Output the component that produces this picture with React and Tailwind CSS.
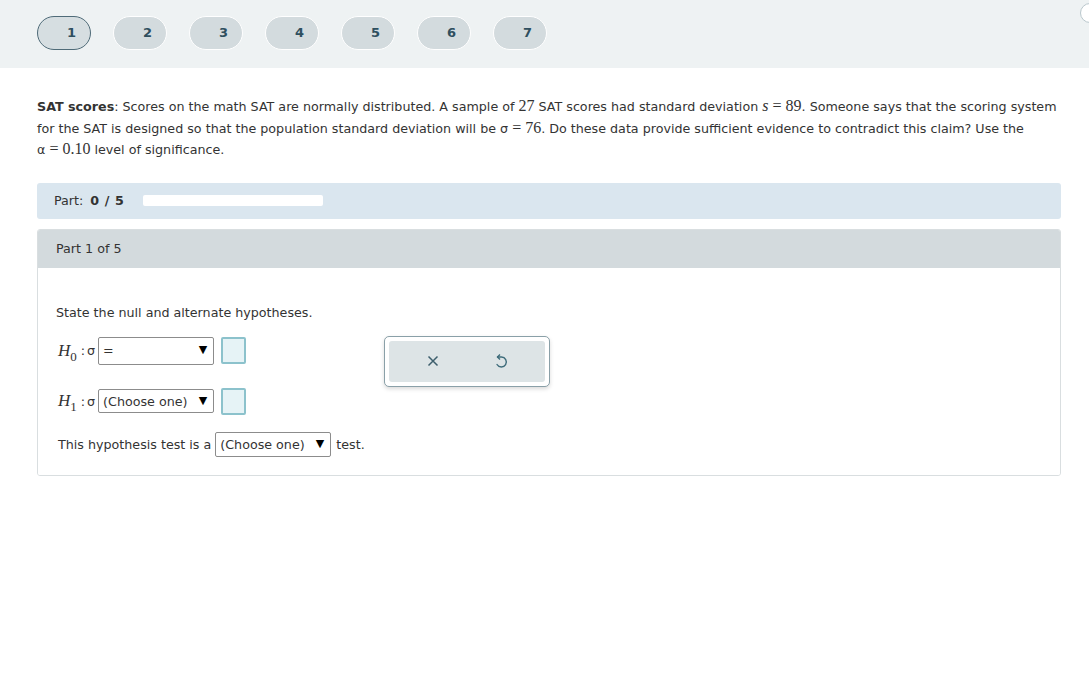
import React from "react";

const steps = [1, 2, 3, 4, 5, 6, 7];

const M = ({ children, italic }) => (
  <span
    className={`font-['Liberation_Serif',serif] text-[16px] leading-none ${italic ? "italic" : ""}`}
  >
    {children}
  </span>
);

const Select = ({ label, className }) => (
  <div
    className={`flex items-center justify-between border border-[#8c8c8c] rounded-[2px] bg-white pl-[4px] pr-[6px] ${className}`}
  >
    <span>{label}</span>
    <span className="text-[11px] text-black">▼</span>
  </div>
);

const Hyp = ({ sub, h }) => (
  <div className="flex items-center">
    <span className="font-['Liberation_Serif',serif] italic text-[17px] text-[#333]">H</span>
    <span className="font-['Liberation_Serif',serif] text-[13px] relative top-[6px] text-[#333]">{sub}</span>
    <span className="ml-[4px] mr-[2px]">:</span>
    <span>σ</span>
    <div className="ml-[3px]">
      <Select label={h === 0 ? "=" : "(Choose one)"} className={h === 0 ? "w-[116px] h-[28px]" : "w-[116px] h-[24px]"} />
    </div>
    <div className="ml-[7px] w-[25px] h-[27px] rounded-[2px] border-2 border-[#8cc2cc] bg-[#e6f3f6]" />
  </div>
);

export default function App() {
  return (
    <div className="relative min-h-screen bg-white text-[12.7px] text-[#333] font-['DejaVu_Sans',Verdana,sans-serif] overflow-hidden">
      {/* step nav */}
      <div className="h-[68px] bg-[#eef2f3] flex pl-[37px] pt-[16px] gap-[22px]">
        {steps.map((n) => (
          <div
            key={n}
            className={`w-[54px] h-[34px] rounded-full flex items-center justify-end pr-[14px] font-bold text-[13px] text-[#2f4f5f] ${
              n === 1 ? "bg-[#d6dee1] border border-[#4f6b78]" : "bg-[#d3dbde] border border-white"
            }`}
          >
            {n}
          </div>
        ))}
      </div>
      <div className="absolute right-[-11px] top-[3px] w-[20px] h-[20px] rounded-full bg-white border border-[#b9c7cc]" />

      <div className="pl-[37px] pr-[28px]">
        <p className="mt-[28px] mr-[-4px] leading-[21.5px]">
          <b>SAT scores</b>: Scores on the math SAT are normally distributed. A sample of <M>27</M> SAT scores had standard deviation{" "}
          <M italic>s</M> <M>= 89</M>. Someone says that the scoring system for the SAT is designed so that the population standard deviation
          will be σ <M>= 76</M>. Do these data provide sufficient evidence to contradict this claim? Use the
          <br />
          α <M>= 0.10</M> level of significance.
        </p>

        {/* part bar */}
        <div className="mt-[22px] h-[36px] rounded-[3px] bg-[#dae6ef] flex items-center pl-[17px]">
          <span>Part:</span>
          <span className="ml-[7px] font-bold tracking-[0.6px]">0 / 5</span>
          <div className="ml-[19px] w-[180px] h-[11px] rounded-[2px] bg-white" />
        </div>

        {/* part card */}
        <div className="mt-[10px] rounded-[3px] border border-[#d9dee0] overflow-hidden">
          <div className="h-[38px] bg-[#d3dadd] flex items-center pl-[18px]">Part 1 of 5</div>
          <div className="bg-white pt-[35px] pb-[18px] pl-[18px] flex">
            <div className="w-[328px]">
              <p>State the null and alternate hypotheses.</p>
              <div className="mt-[15px] pl-[2px]">
                <Hyp sub="0" h={0} />
              </div>
              <div className="mt-[23px] pl-[2px]">
                <Hyp sub="1" h={1} />
              </div>
              <div className="mt-[17px] pl-[2px] flex items-center">
                <span>This hypothesis test is a</span>
                <Select label="(Choose one)" className="ml-[4px] w-[116px] h-[25px]" />
                <span className="ml-[5px]">test.</span>
              </div>
            </div>
            <div className="mt-[33px]">
              <div className="w-[166px] h-[51px] rounded-[5px] border border-[#8aa0a8] bg-white p-[4px] shadow-[0_2px_4px_rgba(0,0,0,0.15)]">
                <div className="h-full rounded-[3px] bg-[#dde4e6] flex items-center justify-around px-[10px]">
                  <svg width="12" height="12" viewBox="0 0 12 12" className="text-[#3d5f6d]">
                    <path d="M1.5 1.5 L10.5 10.5 M10.5 1.5 L1.5 10.5" stroke="currentColor" strokeWidth="1.5" fill="none" />
                  </svg>
                  <svg width="14" height="16" viewBox="0 0 14 16" className="text-[#3d6b7a]">
                    <path d="M6 1.5 L3.5 4 L6 6.5" stroke="currentColor" strokeWidth="1.4" fill="none" strokeLinejoin="round" />
                    <path d="M3.5 4 H7.5 A5 5 0 1 1 3 11.5" stroke="currentColor" strokeWidth="1.4" fill="none" strokeLinecap="round" />
                  </svg>
                </div>
              </div>
            </div>
          </div>
        </div>
      </div>
    </div>
  );
}
